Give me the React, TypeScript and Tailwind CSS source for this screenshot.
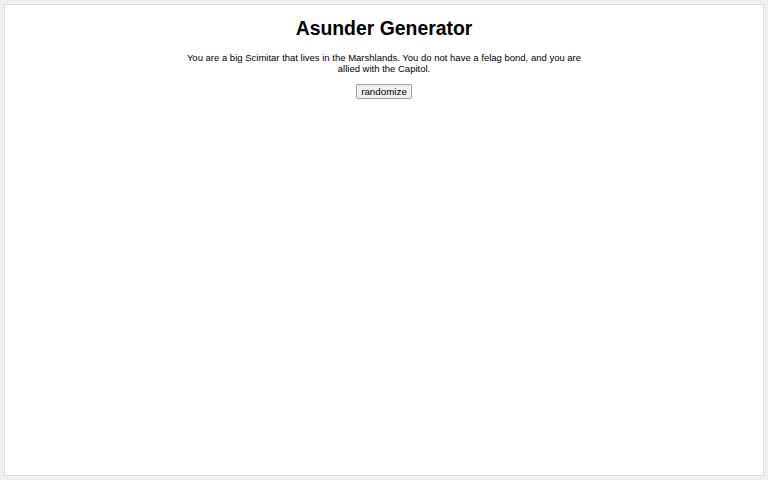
import { useState } from 'react'

const sizes = ['big', 'small', 'tiny', 'huge']
const kinds = ['Scimitar', 'Rapier', 'Halberd', 'Dagger']
const places = ['Marshlands', 'Highlands', 'Capitol', 'Wastes']
const allies = ['the Capitol', 'the Rebels', 'nobody']

function pick<T>(list: T[]): T {
  return list[Math.floor(Math.random() * list.length)]
}

export default function App() {
  const [text, setText] = useState(
    'You are a big Scimitar that lives in the Marshlands. You do not have a felag bond, and you are allied with the Capitol.'
  )

  const randomize = () => {
    const bond = Math.random() > 0.5 ? 'have a felag bond' : 'do not have a felag bond'
    setText(
      `You are a ${pick(sizes)} ${pick(kinds)} that lives in the ${pick(places)}. You ${bond}, and you are allied with ${pick(allies)}.`
    )
  }

  return (
    <div className="h-[480px] bg-[#efefef] p-1 font-['Liberation_Sans',Arial,sans-serif]">
      <div className="flex h-full flex-col items-center border border-[#dcdcdc] bg-white pt-[11px]">
        <h1 className="text-[19.4px] font-bold leading-[24px] text-black">Asunder Generator</h1>
        <p className="mt-[12px] max-w-[400px] text-center text-[9.5px] leading-[11px] text-black">{text}</p>
        <button
          type="button"
          onClick={randomize}
          className="mt-[10px] rounded-[2px] border border-[#a0a0a0] bg-[#f0f0f0] px-[4px] text-[9.8px] leading-[13px] text-black"
        >
          randomize
        </button>
      </div>
    </div>
  )
}
